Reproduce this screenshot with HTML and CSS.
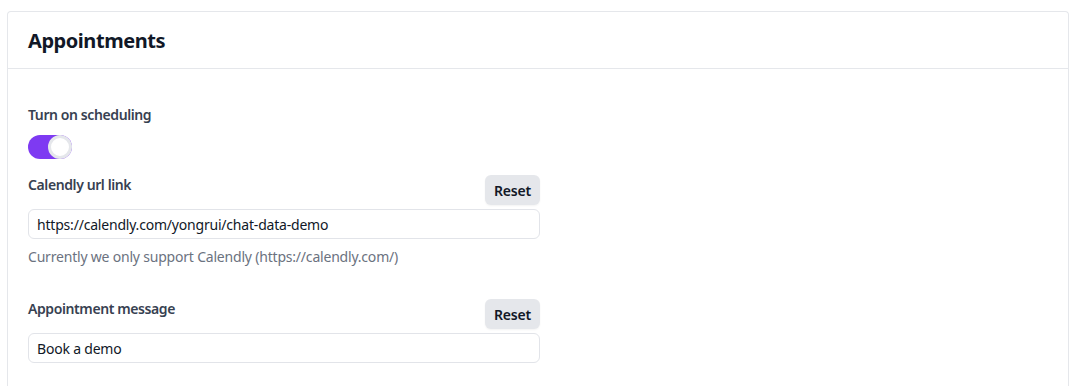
FILE: index.html
```html
<!DOCTYPE html>
<html>
<head>
<meta charset="utf-8">
<link rel="stylesheet" href="styles.css">
</head>
<body>
<div class="card">
  <div class="card-header">
    <h2 class="title">Appointments</h2>
  </div>
  <div class="card-body">
    <div class="field">
      <label class="label">Turn on scheduling</label>
      <div class="toggle"><span class="knob"></span></div>
    </div>
    <div class="field field-url">
      <div class="row">
        <label class="label">Calendly url link</label>
        <button class="reset">Reset</button>
      </div>
      <input class="input" type="text" value="https://calendly.com/yongrui/chat-data-demo">
      <p class="help">Currently we only support Calendly (https://calendly.com/)</p>
    </div>
    <div class="field field-msg">
      <div class="row">
        <label class="label">Appointment message</label>
        <button class="reset">Reset</button>
      </div>
      <input class="input" type="text" value="Book a demo">
    </div>
  </div>
</div>
</body>
</html>
```
FILE: styles.css
```css
* { box-sizing: border-box; }
html, body { margin: 0; background: #ffffff; }
body {
  padding: 11px 8px 0 7px;
  font-family: "Noto Sans", "Open Sans", sans-serif;
  color: #111827;
  height: 386px;
  overflow: hidden;
}
.card {
  border: 1px solid #e5e7eb;
  border-bottom: none;
  border-radius: 4px 4px 0 0;
  background: #fff;
  height: 100%;
}
.card-header {
  height: 57px;
  border-bottom: 1px solid #e5e7eb;
  padding: 0 20px;
  display: flex;
  align-items: center;
}
.title {
  margin: 0;
  font-size: 20px;
  font-weight: 700;
  color: #111827;
  letter-spacing: -0.45px;
}
.card-body {
  padding: 36px 20px 0 20px;
  width: 552px;
}
.field { display: flex; flex-direction: column; }
.label {
  font-size: 14px;
  line-height: 20px;
  font-weight: 600;
  color: #374151;
  letter-spacing: -0.4px;
}
.toggle {
  margin-top: 10px;
  width: 44px;
  height: 24px;
  border-radius: 12px;
  background: #7e3af2;
  position: relative;
}
.knob {
  position: absolute;
  right: 0;
  top: 0;
  width: 24px;
  height: 24px;
  border-radius: 50%;
  background: #fff;
  border: 3px solid #e5e7eb;
}
.field-url { margin-top: 16px; }
.field-msg { margin-top: 32px; }
.row {
  display: flex;
  justify-content: space-between;
  align-items: flex-start;
  margin-bottom: 4px;
}
.reset {
  height: 30px;
  padding: 0 9px;
  border: none;
  border-radius: 6px;
  background: #e5e7eb;
  font-family: inherit;
  font-size: 14px;
  font-weight: 600;
  color: #111827;
  box-shadow: 0 1px 2px rgba(0,0,0,0.05);
  letter-spacing: -0.2px;
}
.input {
  width: 512px;
  height: 30px;
  border: 1px solid #e2e4e9;
  border-radius: 6px;
  padding: 0 8px;
  font-family: inherit;
  font-size: 14px;
  color: #111827;
  letter-spacing: -0.2px;
  outline: none;
}
.help {
  margin: 8px 0 0 0;
  font-size: 14px;
  line-height: 20px;
  color: #6b7280;
  letter-spacing: -0.2px;
}
```
